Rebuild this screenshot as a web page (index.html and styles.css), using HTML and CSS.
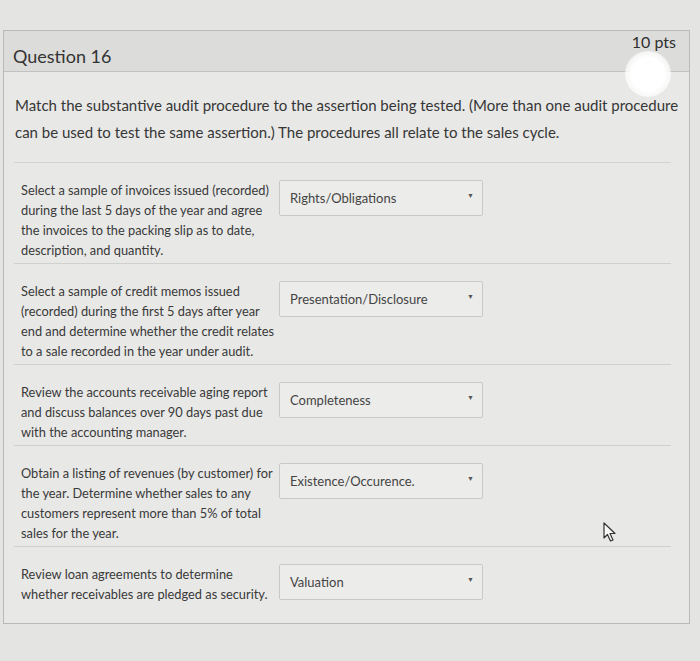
FILE: index.html
```html
<!DOCTYPE html>
<html>
<head>
<meta charset="utf-8">
<link rel="stylesheet" href="styles.css">
</head>
<body>
<div class="card">
  <div class="header">
    <h2 class="title">Question 16</h2>
    <span class="pts">10 pts</span>
  </div>
  <div class="body">
    <p class="prompt">Match the substantive audit procedure to the assertion being tested. (More than one audit procedure can be used to test the same assertion.) The procedures all relate to the sales cycle.</p>
    <div class="rows">
      <div class="row">
        <div class="desc">Select a sample of invoices issued (recorded) during the last 5 days of the year and agree the invoices to the packing slip as to date, description, and quantity.</div>
        <div class="select"><span>Rights/Obligations</span><span class="arrow">&#9660;</span></div>
      </div>
      <div class="row">
        <div class="desc">Select a sample of credit memos issued (recorded) during the first 5 days after year end and determine whether the credit relates to a sale recorded in the year under audit.</div>
        <div class="select"><span>Presentation/Disclosure</span><span class="arrow">&#9660;</span></div>
      </div>
      <div class="row">
        <div class="desc">Review the accounts receivable aging report and discuss balances over 90 days past due with the accounting manager.</div>
        <div class="select"><span>Completeness</span><span class="arrow">&#9660;</span></div>
      </div>
      <div class="row">
        <div class="desc">Obtain a listing of revenues (by customer) for the year. Determine whether sales to any customers represent more than 5% of total sales for the year.</div>
        <div class="select"><span>Existence/Occurence.</span><span class="arrow">&#9660;</span></div>
      </div>
      <div class="row last">
        <div class="desc">Review loan agreements to determine whether receivables are pledged as security.</div>
        <div class="select"><span>Valuation</span><span class="arrow">&#9660;</span></div>
      </div>
    </div>
  </div>
  <div class="glare"></div>
  <svg class="cursor" width="14" height="20" viewBox="0 0 14 20">
    <path d="M1 1 L1 16 L4.5 12.5 L7.5 19 L10 18 L7 11.5 L12 11.5 Z" fill="#fafafa" stroke="#333" stroke-width="1.2" stroke-linejoin="round"/>
  </svg>
</div>
</body>
</html>
```
FILE: styles.css
```css
html, body {
  margin: 0;
  padding: 0;
}
body {
  background: #e4e4e2;
  font-family: Lato, "Open Sans", sans-serif;
  color: #3a3a3a;
  width: 700px;
  height: 661px;
  overflow: hidden;
}
.card {
  position: relative;
  margin: 30px 0 0 3px;
  width: 687px;
  background: #e8e8e6;
  border: 1px solid #b9b9b7;
  box-sizing: border-box;
}
.header {
  display: flex;
  justify-content: space-between;
  align-items: flex-start;
  height: 40px;
  background: #dcdcda;
  border-bottom: 1px solid #c2c2c0;
  padding: 0 13px 0 9px;
}
.title {
  margin: 14px 0 0 0;
  font-size: 18px;
  font-weight: 400;
  color: #343434;
  line-height: 22px;
}
.pts {
  margin-top: 1px;
  font-size: 16px;
  line-height: 20px;
  color: #2f2f2f;
}
.body {
  padding: 20px 6px 16px 10px;
}
.prompt {
  margin: 0 0 16px 0;
  font-size: 15px;
  line-height: 27px;
  color: #363636;
  padding-left: 1px;
}
.rows {
  margin-right: 12px;
  border-top: 1px solid #d2d2d0;
}
.row {
  display: flex;
  align-items: flex-start;
  gap: 3px;
  padding: 17px 0 3px 7px;
  border-bottom: 1px solid #d0d0ce;
}
.row.last {
  border-bottom: none;
}
.desc {
  width: 255px;
  font-size: 12.8px;
  line-height: 20px;
  color: #393939;
}
.select {
  width: 204px;
  height: 36px;
  box-sizing: border-box;
  border: 1px solid #c9c9c7;
  border-radius: 2px;
  background: #ececea;
  display: flex;
  justify-content: space-between;
  align-items: center;
  padding: 0 8px 0 10px;
  font-size: 13px;
  color: #444;
}
.arrow {
  font-size: 7px;
  color: #555;
  margin-top: -6px;
}
.glare {
  position: absolute;
  left: 621px;
  top: 20px;
  width: 46px;
  height: 46px;
  border-radius: 50%;
  background: radial-gradient(circle, #ffffff 0%, #ffffff 50%, rgba(255,255,255,0.7) 68%, rgba(255,255,255,0) 100%);
}
.cursor {
  position: absolute;
  left: 599px;
  top: 491px;
}
```
